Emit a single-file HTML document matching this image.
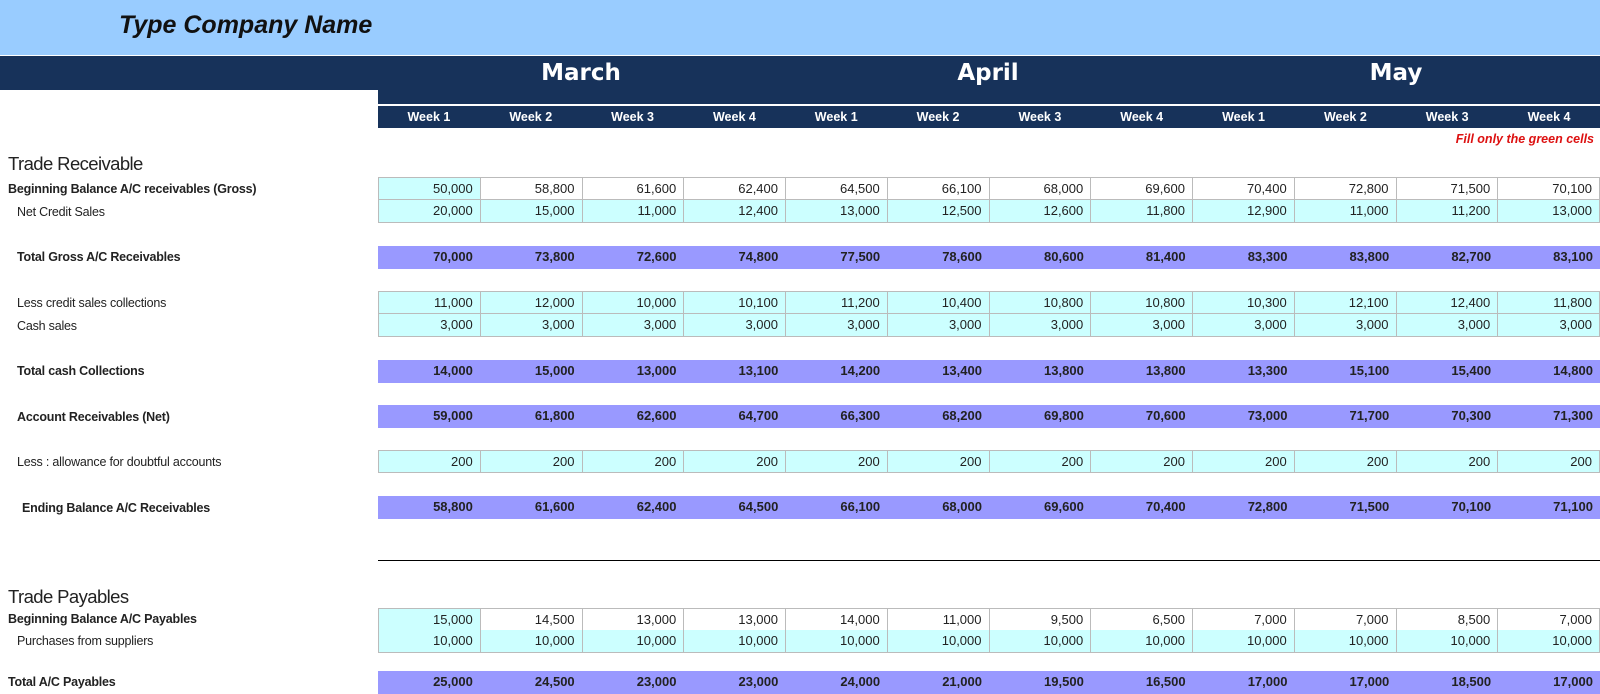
<!DOCTYPE html>
<html><head><meta charset="utf-8"><style>
*{margin:0;padding:0;box-sizing:border-box}
body{width:1600px;height:694px;background:#fff;position:relative;overflow:hidden;font-family:"Liberation Sans",Arial,sans-serif;color:#222}
.abs{position:absolute}
.top{left:0;top:0;width:1600px;height:55px;background:#99ccff}
.cn{left:119px;top:11px;font-size:25px;font-weight:bold;font-style:italic;color:#111;font-family:"Liberation Sans",sans-serif}
.navl{left:0;top:56px;width:378px;height:34px;background:#17325a}
.navr{left:378px;top:56px;width:1222px;height:48px;background:#17325a}
.mon{top:60px;font-size:23px;font-weight:bold;color:#fff;font-family:"DejaVu Sans","Liberation Sans",sans-serif;width:300px;text-align:center}
.row{position:absolute;left:378px;width:1222px;height:23px;display:flex;font-size:13px}
.row div{flex:1;text-align:right;padding-right:7px;line-height:22px}
.wk{top:106px;height:22px;background:#17325a;color:#fff;font-weight:bold;font-size:12.5px}
.wk div{text-align:center;padding:0;line-height:22px}
.c div{background:#ccffff;border-right:1px solid #bbb;border-bottom:1px solid #bbb}
.c{border-top:1px solid #bbb;border-left:1px solid #bbb}
.w div{background:#fff}
.w div:first-child{background:#ccffff}
.p{background:#9999ff;font-weight:bold}
.lab{position:absolute;font-size:12.5px;left:17px;letter-spacing:-0.2px}
.b{font-weight:bold}
.h{position:absolute;left:8px;font-size:18.5px;letter-spacing:-0.6px}
</style></head><body>
<div class="abs top"></div>
<div class="abs cn">Type Company Name</div>
<div class="abs navl"></div>
<div class="abs navr"></div>
<div class="abs mon" style="left:431px">March</div>
<div class="abs mon" style="left:838px">April</div>
<div class="abs mon" style="left:1246px">May</div>
<div class="row wk"><div>Week 1</div><div>Week 2</div><div>Week 3</div><div>Week 4</div><div>Week 1</div><div>Week 2</div><div>Week 3</div><div>Week 4</div><div>Week 1</div><div>Week 2</div><div>Week 3</div><div>Week 4</div></div>
<div class="abs" style="right:6px;top:132px;color:#dd1111;font-weight:bold;font-style:italic;font-size:12.5px">Fill only the green cells</div>

<div class="h" style="top:153px">Trade Receivable</div>
<div class="lab b" style="left:8px;top:182px">Beginning Balance A/C receivables (Gross)</div>
<div class="row c w" style="top:177px"><div>50,000</div><div>58,800</div><div>61,600</div><div>62,400</div><div>64,500</div><div>66,100</div><div>68,000</div><div>69,600</div><div>70,400</div><div>72,800</div><div>71,500</div><div>70,100</div></div>
<div class="lab" style="top:205px">Net Credit Sales</div>
<div class="row c" style="top:200px;border-top:none"><div>20,000</div><div>15,000</div><div>11,000</div><div>12,400</div><div>13,000</div><div>12,500</div><div>12,600</div><div>11,800</div><div>12,900</div><div>11,000</div><div>11,200</div><div>13,000</div></div>

<div class="lab b" style="top:250px">Total Gross A/C Receivables</div>
<div class="row p" style="top:246px"><div>70,000</div><div>73,800</div><div>72,600</div><div>74,800</div><div>77,500</div><div>78,600</div><div>80,600</div><div>81,400</div><div>83,300</div><div>83,800</div><div>82,700</div><div>83,100</div></div>

<div class="lab" style="top:296px">Less credit sales collections</div>
<div class="row c" style="top:291px"><div>11,000</div><div>12,000</div><div>10,000</div><div>10,100</div><div>11,200</div><div>10,400</div><div>10,800</div><div>10,800</div><div>10,300</div><div>12,100</div><div>12,400</div><div>11,800</div></div>
<div class="lab" style="top:319px">Cash sales</div>
<div class="row c" style="top:314px;border-top:none"><div>3,000</div><div>3,000</div><div>3,000</div><div>3,000</div><div>3,000</div><div>3,000</div><div>3,000</div><div>3,000</div><div>3,000</div><div>3,000</div><div>3,000</div><div>3,000</div></div>

<div class="lab b" style="top:364px">Total cash Collections</div>
<div class="row p" style="top:360px"><div>14,000</div><div>15,000</div><div>13,000</div><div>13,100</div><div>14,200</div><div>13,400</div><div>13,800</div><div>13,800</div><div>13,300</div><div>15,100</div><div>15,400</div><div>14,800</div></div>

<div class="lab b" style="top:410px">Account Receivables (Net)</div>
<div class="row p" style="top:405px"><div>59,000</div><div>61,800</div><div>62,600</div><div>64,700</div><div>66,300</div><div>68,200</div><div>69,800</div><div>70,600</div><div>73,000</div><div>71,700</div><div>70,300</div><div>71,300</div></div>

<div class="lab" style="top:455px">Less : allowance for doubtful accounts</div>
<div class="row c" style="top:450px"><div>200</div><div>200</div><div>200</div><div>200</div><div>200</div><div>200</div><div>200</div><div>200</div><div>200</div><div>200</div><div>200</div><div>200</div></div>

<div class="lab b" style="left:22px;top:501px">Ending Balance A/C Receivables</div>
<div class="row p" style="top:496px"><div>58,800</div><div>61,600</div><div>62,400</div><div>64,500</div><div>66,100</div><div>68,000</div><div>69,600</div><div>70,400</div><div>72,800</div><div>71,500</div><div>70,100</div><div>71,100</div></div>

<div class="abs" style="left:378px;top:560px;width:1222px;height:1px;background:#000"></div>

<div class="h" style="top:586px">Trade Payables</div>
<div class="lab b" style="left:8px;top:612px">Beginning Balance A/C Payables</div>
<div class="row c w" style="top:608px"><div>15,000</div><div>14,500</div><div>13,000</div><div>13,000</div><div>14,000</div><div>11,000</div><div>9,500</div><div>6,500</div><div>7,000</div><div>7,000</div><div>8,500</div><div>7,000</div></div>
<div class="lab" style="top:634px">Purchases from suppliers</div>
<div class="row c" style="top:630px;border-top:none"><div>10,000</div><div>10,000</div><div>10,000</div><div>10,000</div><div>10,000</div><div>10,000</div><div>10,000</div><div>10,000</div><div>10,000</div><div>10,000</div><div>10,000</div><div>10,000</div></div>

<div class="lab b" style="left:8px;top:675px">Total A/C Payables</div>
<div class="row p" style="top:671px"><div>25,000</div><div>24,500</div><div>23,000</div><div>23,000</div><div>24,000</div><div>21,000</div><div>19,500</div><div>16,500</div><div>17,000</div><div>17,000</div><div>18,500</div><div>17,000</div></div>
</body></html>
